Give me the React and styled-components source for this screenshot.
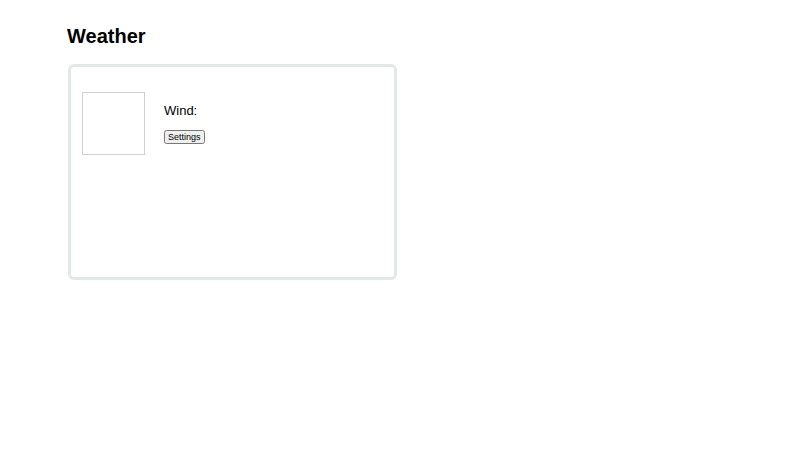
import React from "react";
import styled, { createGlobalStyle } from "styled-components";

const Global = createGlobalStyle`
  html, body { margin: 0; padding: 0; background: #fff; }
  body { font-family: "Liberation Sans", Arial, sans-serif; color: #000; }
`;

const Page = styled.div`
  padding: 25px 0 0 67px;
`;

const Title = styled.h1`
  margin: 0 0 16px 0;
  font-size: 20px;
  font-weight: bold;
  line-height: 23px;
`;

const Card = styled.div`
  box-sizing: border-box;
  width: 329px;
  height: 216px;
  margin-left: 1px;
  border: 3px solid #e2e7e7;
  border-radius: 6px;
  padding: 25px 11px;
  display: flex;
  align-items: flex-start;
  gap: 19px;
`;

const Icon = styled.div`
  box-sizing: border-box;
  width: 63px;
  height: 63px;
  border: 1px solid #d0d0d0;
`;

const Info = styled.div`
  display: flex;
  flex-direction: column;
  align-items: flex-start;
  padding-top: 11px;
`;

const Label = styled.div`
  font-size: 13px;
  line-height: 15px;
  margin-bottom: 12px;
`;

const Button = styled.button`
  font-family: "Liberation Sans", Arial, sans-serif;
  font-size: 9px;
  line-height: 11px;
  padding: 0 2px;
  height: 14px;
`;

export default function App() {
  return (
    <>
      <Global />
      <Page>
        <Title>Weather</Title>
        <Card>
          <Icon />
          <Info>
            <Label>Wind:</Label>
            <Button>Settings</Button>
          </Info>
        </Card>
      </Page>
    </>
  );
}
